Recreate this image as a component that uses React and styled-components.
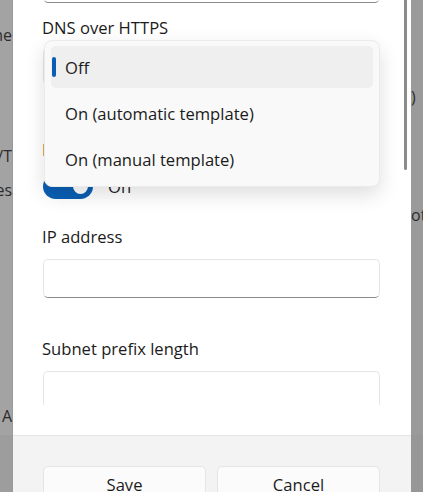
import React from "react";
import styled, { createGlobalStyle } from "styled-components";

const GlobalStyle = createGlobalStyle`
  html, body {
    margin: 0;
    padding: 0;
    background: #a1a1a1;
  }
  body {
    font-family: "Open Sans", "Noto Sans", sans-serif;
    color: #1b1b1b;
  }
  * {
    box-sizing: border-box;
  }
`;

function App() {
  return (
    <>
      <GlobalStyle />
      <Screen>
        <Backdrop side="left">
          <BackRow top={24}>Frame</BackRow>
          <BackRow top={99}>IPv4/T</BackRow>
          <BackRow top={12}>Addres</BackRow>
          <BackRow top={204}>A</BackRow>
        </Backdrop>
        <Dialog>
          <Body>
            <Scroll>
              <Field shift={-47}>
                <Input />
              </Field>
              <Label top={14}>DNS over HTTPS</Label>
              <Combo />
              <Label top={54}>IPv6</Label>
              <ToggleRow>
                <Toggle>
                  <Knob />
                </Toggle>
                <ToggleText>On</ToggleText>
              </ToggleRow>
              <Label top={27}>IP address</Label>
              <Input />
              <Label top={40}>Subnet prefix length</Label>
              <Input />
            </Scroll>
            <ScrollBar />
            <Popup>
              <Option selected>
                <Indicator />
                Off
              </Option>
              <Option>On (automatic template)</Option>
              <Option>On (manual template)</Option>
            </Popup>
          </Body>
          <Footer>
            <Button>Save</Button>
            <Button>Cancel</Button>
          </Footer>
        </Dialog>
        <Backdrop side="right">
          <BackRow top={86} align="left">)</BackRow>
          <BackRow top={96} align="left">ot</BackRow>
        </Backdrop>
      </Screen>
    </>
  );
}

export default App;

const Screen = styled.div`
  display: flex;
  width: 423px;
  height: 492px;
  overflow: hidden;
`;

const Backdrop = styled.div`
  display: flex;
  flex-direction: column;
  width: ${({ side }) => (side === "left" ? 13 : 12)}px;
  flex-shrink: 0;
  overflow: hidden;
  background: linear-gradient(
    to bottom,
    ${({ side }) => (side === "left" ? "#a3a3a3" : "#9a9a9a")} 0 435px,
    ${({ side }) => (side === "left" ? "#9d9d9d" : "#979797")} 435px
  );
  ${({ side }) => (side === "left" ? "border-right: 1px solid #9a9a9a;" : "")}
`;

const BackRow = styled.div`
  display: flex;
  justify-content: ${({ align }) => (align === "left" ? "flex-start" : "flex-end")};
  margin-top: ${({ top }) => top}px;
  font-size: 16px;
  line-height: 22px;
  color: #2c2c2c;
  white-space: nowrap;
`;

const Dialog = styled.div`
  display: flex;
  flex-direction: column;
  width: 398px;
  flex-shrink: 0;
  background: #ffffff;
`;

const Body = styled.div`
  position: relative;
  height: 435px;
  flex-shrink: 0;
`;

const Scroll = styled.div`
  display: flex;
  flex-direction: column;
  height: 405px;
  padding: 0 31px 0 30px;
  overflow: hidden;
`;

const Field = styled.div`
  margin-top: ${({ shift }) => shift}px;
`;

const Label = styled.div`
  margin-top: ${({ top }) => top}px;
  margin-left: -1px;
  font-size: 16.6px;
  line-height: 22px;
  color: #1b1b1b;
  flex-shrink: 0;
`;

const Input = styled.div`
  height: 39px;
  flex-shrink: 0;
  margin-top: 11px;
  background: #ffffff;
  border: 1px solid #e6e6e6;
  border-bottom: 1px solid #8a8a8a;
  border-radius: 5px;
`;

const Combo = styled.div`
  height: 38px;
  margin-top: 8px;
  flex-shrink: 0;
  border: 1px solid #e6e6e6;
  border-radius: 5px;
  background: #fbfbfb;
`;

const ToggleRow = styled.div`
  display: flex;
  align-items: center;
  gap: 15px;
  margin-top: 13px;
  flex-shrink: 0;
`;

const Toggle = styled.div`
  display: flex;
  align-items: center;
  justify-content: flex-end;
  width: 50px;
  height: 25px;
  padding-right: 5px;
  border-radius: 13px;
  background: #0a5fb4;
`;

const Knob = styled.div`
  width: 15px;
  height: 15px;
  border-radius: 50%;
  background: #ffffff;
`;

const ToggleText = styled.span`
  font-size: 16.6px;
  line-height: 22px;
`;

const ScrollBar = styled.div`
  position: absolute;
  top: -4px;
  right: 4px;
  width: 3px;
  height: 174px;
  border-radius: 2px;
  background: #8b8b8b;
`;

const Popup = styled.div`
  position: absolute;
  top: 40px;
  left: 31px;
  width: 336px;
  height: 147px;
  display: flex;
  flex-direction: column;
  gap: 4px;
  padding: 5px 6px 6px;
  background: #f9f9f9;
  border: 1px solid #ebebeb;
  border-radius: 8px;
  box-shadow: 0 8px 20px rgba(0, 0, 0, 0.13);
`;

const Option = styled.div`
  position: relative;
  display: flex;
  align-items: center;
  height: 42px;
  flex-shrink: 0;
  padding-left: 14px;
  border-radius: 5px;
  font-size: 16.6px;
  color: #1b1b1b;
  background: ${({ selected }) => (selected ? "#efefef" : "transparent")};
`;

const Indicator = styled.span`
  position: absolute;
  left: 1px;
  top: 11px;
  width: 4px;
  height: 20px;
  border-radius: 2px;
  background: #0a5fb4;
`;

const Footer = styled.div`
  display: grid;
  grid-template-columns: 1fr 1fr;
  gap: 11px;
  flex: 1;
  padding: 30px 31px 0 30px;
  background: #f3f3f3;
  border-top: 1px solid #e5e5e5;
`;

const Button = styled.div`
  display: flex;
  justify-content: center;
  padding-top: 7px;
  height: 40px;
  background: #fbfbfb;
  border: 1px solid #e5e5e5;
  border-radius: 5px;
  font-size: 16.6px;
  line-height: 22px;
  color: #1b1b1b;
`;
